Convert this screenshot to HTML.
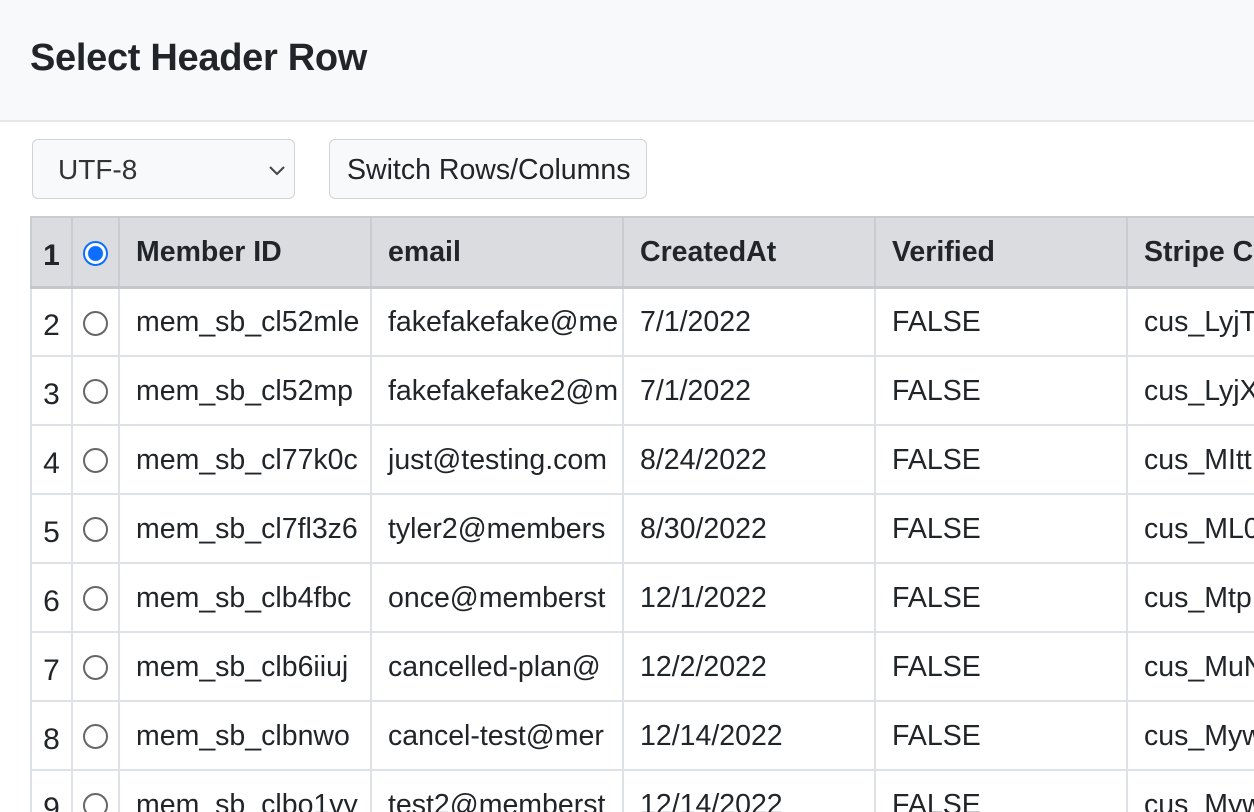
<!DOCTYPE html>
<html><head><style>
body{margin:0;width:1254px;height:812px;overflow:hidden;background:#fff;font-family:"Liberation Sans",Arial,sans-serif;color:#212529;position:relative}
.hd{background:#f8f9fa;border-bottom:2px solid #e5e7ea;box-sizing:border-box;height:122px}
.hd h1{margin:0;position:absolute;left:30px;top:37px;font-size:38px;font-weight:bold;letter-spacing:-0.3px}
.sel{position:absolute;left:32px;top:139px;width:263px;height:60px;border:1px solid #ced4da;border-radius:6px;background:#f8f9fa;box-sizing:border-box;font-size:28px;padding:14px 0 0 25px;color:#333}
.sel svg{position:absolute;right:8px;top:24px}
.btn{position:absolute;left:329px;top:139px;width:318px;height:60px;border:1px solid #ced4da;border-radius:6px;background:#f8f9fa;box-sizing:border-box;font-size:28.5px;padding:14px 0 0 17px}
.wrap{position:absolute;left:0;top:0;width:1254px;height:812px;overflow:hidden}
table{position:absolute;left:30px;top:216px;border-collapse:collapse;table-layout:fixed;width:1400px}
td,th{border:2px solid #dee2e6;height:67px;line-height:30px;font-size:28.5px;white-space:nowrap;overflow:hidden;padding:0 16px 0 16px;text-align:left;box-sizing:border-box}
th{background:#dadce0;font-weight:bold;border-color:#c9ccd0;border-bottom:3px solid #c4c7cb}
td.n,th.n{padding:8px 0 0;text-align:center;font-size:30px}
.r{padding:0;text-align:center}
.rad{display:inline-block;width:25px;height:25px;border:2px solid #666;border-radius:50%;box-sizing:border-box;vertical-align:middle}
.on{border:2px solid #0d6efd;background:radial-gradient(circle,#0d6efd 0 7px,#fff 8px)}
tr{height:69px}
tr:first-child{height:70px}
</style></head><body>
<div class="hd"><h1>Select Header Row</h1></div>
<div class="sel">UTF-8<svg width="18" height="12" viewBox="0 0 18 12"><path d="M2 3l7 7 7-7" fill="none" stroke="#444" stroke-width="2"/></svg></div>
<div class="btn">Switch Rows/Columns</div>
<div class="wrap">
<table>
<colgroup><col style="width:41px"><col style="width:47px"><col style="width:252px"><col style="width:252px"><col style="width:252px"><col style="width:252px"><col style="width:304px"></colgroup>
<tr><th class="n">1</th><th class="r"><span class="rad on"></span></th><th>Member ID</th><th>email</th><th>CreatedAt</th><th>Verified</th><th>Stripe Customer</th></tr>
<tr><td class="n">2</td><td class="r"><span class="rad"></span></td><td>mem_sb_cl52mle</td><td>fakefakefake@me</td><td>7/1/2022</td><td>FALSE</td><td>cus_LyjT</td></tr>
<tr><td class="n">3</td><td class="r"><span class="rad"></span></td><td>mem_sb_cl52mp</td><td>fakefakefake2@m</td><td>7/1/2022</td><td>FALSE</td><td>cus_LyjX</td></tr>
<tr><td class="n">4</td><td class="r"><span class="rad"></span></td><td>mem_sb_cl77k0c</td><td>just@testing.com</td><td>8/24/2022</td><td>FALSE</td><td>cus_MItt</td></tr>
<tr><td class="n">5</td><td class="r"><span class="rad"></span></td><td>mem_sb_cl7fl3z6</td><td>tyler2@members</td><td>8/30/2022</td><td>FALSE</td><td>cus_ML0</td></tr>
<tr><td class="n">6</td><td class="r"><span class="rad"></span></td><td>mem_sb_clb4fbc</td><td>once@memberst</td><td>12/1/2022</td><td>FALSE</td><td>cus_Mtp</td></tr>
<tr><td class="n">7</td><td class="r"><span class="rad"></span></td><td>mem_sb_clb6iiuj</td><td>cancelled-plan@</td><td>12/2/2022</td><td>FALSE</td><td>cus_MuN</td></tr>
<tr><td class="n">8</td><td class="r"><span class="rad"></span></td><td>mem_sb_clbnwo</td><td>cancel-test@mer</td><td>12/14/2022</td><td>FALSE</td><td>cus_Myw</td></tr>
<tr><td class="n">9</td><td class="r"><span class="rad"></span></td><td>mem_sb_clbo1vy</td><td>test2@memberst</td><td>12/14/2022</td><td>FALSE</td><td>cus_Myw</td></tr>
</table>
</div>
</body></html>
